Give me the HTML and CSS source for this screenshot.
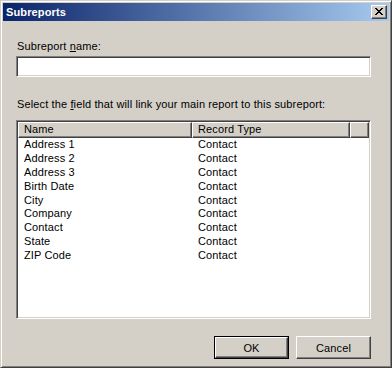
FILE: index.html
```html
<!DOCTYPE html>
<html>
	<head>
		<meta charset="utf-8">
		<title>Subreports</title>
		<link rel="stylesheet" href="styles.css">
	</head>
	<body>

		<div class="dialog">
			<div class="titlebar">
				<span class="title">Subreports</span>
				<span class="close">
					<svg width="8" height="7" viewBox="0 0 8 7">
						<path d="M0 0h2v1h-2zM6 0h2v1h-2zM1 1h2v1h-2zM5 1h2v1h-2zM2 2h4v1h-4zM3 3h2v1h-2zM2 4h4v1h-4zM1 5h2v1h-2zM5 5h2v1h-2zM0 6h2v1h-2zM6 6h2v1h-2z" fill="#000"/>
					</svg>
				</span>
			</div>

			<div class="content">
				<div class="label">Subreport <u>n</u>ame:</div>
				<div class="textbox"></div>

				<div class="label label-link">Select the <u>f</u>ield that will link your main report to this subreport:</div>

				<div class="list">
					<div class="list-head">
						<div class="col col-name">Name</div>
						<div class="col col-type">Record Type</div>
						<div class="col col-rest"></div>
					</div>
					<div class="list-rows">
						<div class="row"><span>Address 1</span><span>Contact</span></div>
						<div class="row"><span>Address 2</span><span>Contact</span></div>
						<div class="row"><span>Address 3</span><span>Contact</span></div>
						<div class="row"><span>Birth Date</span><span>Contact</span></div>
						<div class="row"><span>City</span><span>Contact</span></div>
						<div class="row"><span>Company</span><span>Contact</span></div>
						<div class="row"><span>Contact</span><span>Contact</span></div>
						<div class="row"><span>State</span><span>Contact</span></div>
						<div class="row"><span>ZIP Code</span><span>Contact</span></div>
					</div>
				</div>

				<div class="buttons">
					<div class="btn btn-default"><div class="btn-face">OK</div></div>
					<div class="btn"><div class="btn-face">Cancel</div></div>
				</div>
			</div>
		</div>

	</body>
</html>
```

FILE: styles.css
```css
body{
	margin:0;
	background:#d4d0c8;
	font-family:"Liberation Sans", Arial, sans-serif;
	font-size:11px;
	letter-spacing:0.13px;
	color:#000;
}

.dialog{
	box-sizing:border-box;
	width:392px;
	height:368px;
	background:#d4d0c8;
	border:1px solid;
	border-color:#d4d0c8 #404040 #404040 #d4d0c8;
	box-shadow:inset 1px 1px #fff, inset -1px -1px #808080;
	padding:2px;
	display:flex;
	flex-direction:column;
}

.titlebar{
	height:18px;
	background:linear-gradient(to right, #0a246a, #a6caf0);
	display:flex;
	align-items:center;
	justify-content:space-between;
	padding:0 2px 0 3px;
}

.title{
	color:#fff;
	font-weight:bold;
	font-size:11px;
}

.close{
	box-sizing:border-box;
	width:16px;
	height:14px;
	background:#d4d0c8;
	border:1px solid;
	border-color:#fff #404040 #404040 #fff;
	box-shadow:inset -1px -1px #808080;
	display:flex;
	align-items:center;
	justify-content:center;
}

.close svg{
	display:block;
	margin:0 1px 1px 0;
}

.content{
	flex:1;
	display:flex;
	flex-direction:column;
	padding:19px 18px 0 13px;
}

.label{
	line-height:13px;
	padding-left:1px;
}

.label u{
	text-decoration:underline;
}

.textbox{
	box-sizing:border-box;
	height:21px;
	margin-top:3px;
	background:#fff;
	border:1px solid;
	border-color:#808080 #fff #fff #808080;
	box-shadow:inset 1px 1px #404040, inset -1px -1px #d4d0c8;
}

.label-link{
	margin-top:21px;
}

.list{
	box-sizing:border-box;
	height:199px;
	margin-top:9px;
	background:#fff;
	border:1px solid;
	border-color:#808080 #fff #fff #808080;
	box-shadow:inset 1px 1px #404040, inset -1px -1px #d4d0c8;
	padding:1px;
}

.list-head{
	display:flex;
	height:16px;
}

.col{
	box-sizing:border-box;
	height:16px;
	background:#d4d0c8;
	border:1px solid;
	border-color:#fff #404040 #404040 #fff;
	box-shadow:inset -1px -1px #808080;
	line-height:13px;
	padding-left:5px;
}

.col-name{
	width:174px;
}

.col-type{
	width:158px;
}

.col-rest{
	flex:1;
}

.list-rows{
	padding-top:0;
}

.row{
	display:flex;
	height:13.875px;
	line-height:13px;
}

.row span{
	padding-left:6px;
}

.row span:first-child{
	width:168px;
}

.buttons{
	display:flex;
	justify-content:flex-end;
	gap:7px;
	margin-top:17px;
}

.btn{
	box-sizing:border-box;
	width:75px;
	height:23px;
	background:#d4d0c8;
	border:1px solid;
	border-color:#fff #404040 #404040 #fff;
	box-shadow:inset -1px -1px #808080;
}

.btn-face{
	height:100%;
	display:flex;
	align-items:center;
	justify-content:center;
}

.btn-default{
	border:1px solid #000;
	box-shadow:none;
}

.btn-default .btn-face{
	box-sizing:border-box;
	border:1px solid;
	border-color:#fff #404040 #404040 #fff;
	box-shadow:inset -1px -1px #808080;
}
```
